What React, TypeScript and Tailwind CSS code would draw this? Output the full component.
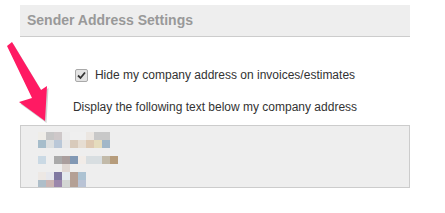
import React from 'react';

// pixelated (blurred-out) address blocks, 8px cells
const rows: (string | null)[][] = [
    ['#efede8', '#c6c6c6', '#cec8c9', '#ececec', '#efefef', '#efefef', '#ebe6e1', '#c8c8c8', '#c8c8c8'],
    ['#a6bdcb', '#dcdfe0', '#bac8d8', '#e8e8e8', '#d8cabb', '#e6ddd2', '#dec9b2', '#e5dcbd', '#a1b7c8'],
    [],
    ['#cad9e4', null, '#aaaaaa', '#aa9e9d', '#8198b4', '#f1ece8', '#d8dee1', '#d8dee1', '#c2baa9', '#b69c7b'],
    [null, null, null, '#e0d8d3'],
    ['#ede8e4', '#e6e7ec', '#8079a1', '#e4eaee', '#b4a095', '#acc2d2'],
    ['#aebec9', '#cbb5b3', '#9b87ac', '#d3d6d3', '#b4a095', '#b9c3d5'],
];

function Arrow() {
    const pts = '12,42 41,90 47,86 45,121 19,102 32,98 7,46';
    return (
        <svg className="absolute left-0 top-0" width="60" height="130" viewBox="0 0 60 130">
            <polygon points={pts} fill="#000" opacity="0.18" transform="translate(1.5,2)" />
            <polygon points={pts} fill="#ff1a63" />
        </svg>
    );
}

function Check() {
    return (
        <span className="w-[13px] h-[13px] rounded-[2px] border border-[#a9a9a9] bg-[#e3e3e3] flex items-center justify-center">
            <svg width="9" height="9" viewBox="0 0 9 9">
                <path d="M1 4.5 L3.5 7 L8 1.5" fill="none" stroke="#333" strokeWidth="1.8" />
            </svg>
        </span>
    );
}

export default function App() {
    return (
        <div className="relative w-[445px] h-[213px] bg-white overflow-hidden" style={{ fontFamily: '"Liberation Sans", Arial, sans-serif' }}>
            <div className="ml-[20px] mt-[5px] w-[390px]">
                <div className="h-[32px] bg-[#eeeeee] border-b border-[#cccccc] flex items-center pl-[7px]">
                    <h2 className="text-[14px] font-bold text-[#999999]">Sender Address Settings</h2>
                </div>

                <div className="flex justify-center items-center gap-[7px] mt-[29px] text-[12px] leading-[18px] text-[#333333]">
                    <Check />
                    <span>Hide my company address on invoices/estimates</span>
                </div>

                <p className="text-center text-[12px] leading-[18px] text-[#333333] mt-[14px]">
                    Display the following text below my company address
                </p>

                <div className="mt-[9px] h-[63px] bg-[#eeeeee] border border-[#cccccc] pt-[6px] pl-[17px] overflow-hidden">
                    {rows.map((r, i) => (
                        <div key={i} className="flex h-[8px]">
                            {r.map((c, j) => (
                                <div key={j} className="w-[8px] h-[8px]" style={{ backgroundColor: c ?? 'transparent' }} />
                            ))}
                        </div>
                    ))}
                </div>
            </div>
            <Arrow />
        </div>
    );
}
